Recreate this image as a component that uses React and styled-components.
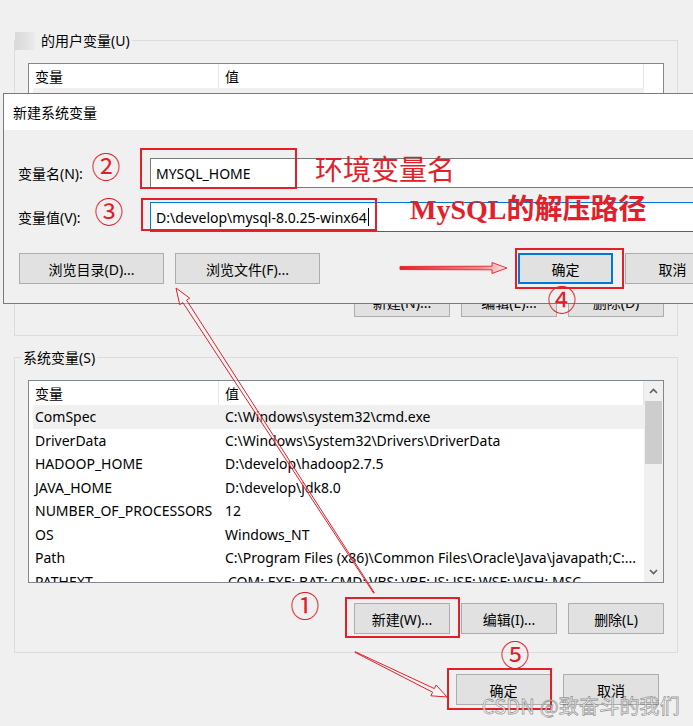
import React from "react";
import styled, { createGlobalStyle } from "styled-components";

const UI_FONT = `"Noto Sans", "Noto Sans CJK SC", sans-serif`;
const RED = "#e3202a";

const GlobalStyle = createGlobalStyle`
  html, body { margin: 0; padding: 0; background: #f0f0f0; }
  * { box-sizing: border-box; }
`;

const Screen = styled.div`
  position: relative;
  width: 693px;
  height: 726px;
  overflow: hidden;
  background: #f0f0f0;
  padding: 40px 15px 0 14px;
  font-family: ${UI_FONT};
  font-size: 14px;
  color: #000;
`;

const Group = styled.section`
  border: 1px solid #dcdcdc;
  padding: 0 13px 18px 13px;
  margin-bottom: ${(p) => (p.$last ? 0 : 21)}px;
`;

const GroupTitle = styled.div`
  display: flex;
  align-items: center;
  width: fit-content;
  height: 20px;
  line-height: 20px;
  margin: -10px 0 12px -7px;
  padding: 0 2px;
  background: #f0f0f0;
`;

const Redacted = styled.span`
  display: inline-block;
  width: 20px;
  height: 18px;
  margin: 0 6px 0 -8px;
  background: linear-gradient(90deg, #d9d9d9, #e4e4e4 70%, #ececec);
  filter: blur(0.6px);
`;

const List = styled.div`
  display: flex;
  height: 203px;
  border: 1px solid #828790;
  background: #fff;
`;

const Table = styled.div`
  flex: 1;
  padding-left: 4px;
  overflow: hidden;
`;

const Row = styled.div`
  display: flex;
  height: ${(p) => (p.$head ? 24 : 23.5)}px;
  align-items: center;
  background: ${(p) => (p.$selected ? "#f0f0f0" : "#fff")};
  white-space: nowrap;
`;

const Cell = styled.div`
  height: 100%;
  display: flex;
  align-items: center;
  overflow: hidden;
  ${(p) =>
    p.$first
      ? `width: 186px; flex: none; padding-left: 2px;`
      : `flex: 1; padding-left: 6px;`}
  border-right: ${(p) => (p.$head ? "1px solid #e5e5e5" : "none")};
`;

const Scrollbar = styled.div`
  width: 19px;
  display: flex;
  flex-direction: column;
  background: ${(p) => (p.$empty ? "#fff" : "#f0f0f0")};
`;

const ScrollArrow = styled.div`
  height: 20px;
  display: flex;
  align-items: center;
  justify-content: center;
`;

const Thumb = styled.div`
  height: 63px;
  margin: 0 1px;
  background: #cdcdcd;
`;

const Spacer = styled.div`
  flex: 1;
`;

const ButtonRow = styled.div`
  display: flex;
  justify-content: flex-end;
  gap: ${(p) => p.$gap || 11}px;
  margin-top: 20px;
  padding-right: ${(p) => p.$inset || 0}px;
`;

const Button = styled.div`
  width: ${(p) => p.$w || 96}px;
  height: 31px;
  flex: none;
  display: flex;
  align-items: center;
  justify-content: center;
  background: #e1e1e1;
  border: ${(p) => (p.$focused ? "2px solid #0078d7" : "1px solid #adadad")};
  white-space: nowrap;
`;

const BottomRow = styled(ButtonRow)`
  margin-top: 21px;
`;

/* dialog over the window */
const Dialog = styled.div`
  position: absolute;
  left: 3px;
  top: 93px;
  width: 728px;
  border: 1px solid #7a7a7a;
  background: #f0f0f0;
  z-index: 2;
`;

const DialogTitle = styled.div`
  height: 36px;
  display: flex;
  align-items: center;
  padding-left: 9px;
  background: #fff;
`;

const DialogBody = styled.div`
  padding: 28px 10px 19px 14px;
  display: flex;
  flex-direction: column;
  gap: 14px;
`;

const FieldRow = styled.div`
  display: flex;
  align-items: center;
  height: 30px;
`;

const FieldLabel = styled.div`
  width: 132px;
  flex: none;
`;

const TextBox = styled.div`
  flex: 1;
  height: 30px;
  display: flex;
  align-items: center;
  padding-left: 5px;
  background: #fff;
  border: 1px solid ${(p) => (p.$focused ? "#0078d7" : "#7a7a7a")};
  white-space: nowrap;
`;

const Caret = styled.span`
  width: 1px;
  height: 18px;
  margin-left: 1px;
  background: #000;
`;

const DialogButtons = styled.div`
  display: flex;
  gap: 11px;
  margin-top: 7px;
  padding-left: 1px;
`;

const PushRight = styled.div`
  margin-left: auto;
  display: flex;
  gap: 12px;
`;

/* red annotations */
const Callout = styled.div`
  position: absolute;
  left: ${(p) => p.$x}px;
  top: ${(p) => p.$y}px;
  width: ${(p) => p.$w}px;
  height: ${(p) => p.$h}px;
  border: 2px solid ${RED};
  z-index: 3;
`;

const Step = styled.span`
  position: absolute;
  left: ${(p) => p.$x}px;
  top: ${(p) => p.$y}px;
  transform: translate(-50%, -50%);
  font-family: "DejaVu Serif", "Noto Sans CJK SC", serif;
  font-size: 29px;
  line-height: 1;
  color: ${RED};
  z-index: 3;
`;

const Note = styled.div`
  position: absolute;
  left: ${(p) => p.$x}px;
  top: ${(p) => p.$y}px;
  font-family: ${(p) =>
    p.$bold
      ? `"Liberation Serif", "Noto Sans CJK SC", serif`
      : `"Noto Sans CJK SC", sans-serif`};
  font-weight: ${(p) => (p.$bold ? 700 : 400)};
  font-size: 28px;
  line-height: 1;
  color: ${RED};
  white-space: nowrap;
  z-index: 3;
`;

const Arrows = styled.svg`
  position: absolute;
  left: 0;
  top: 0;
  z-index: 4;
  pointer-events: none;
`;

const Watermark = styled.div`
  position: absolute;
  right: 13px;
  bottom: 8px;
  font-family: "Noto Sans CJK SC", sans-serif;
  font-size: 20px;
  line-height: 24px;
  letter-spacing: 0.2px;
  color: rgba(255, 255, 255, 0.82);
  -webkit-text-stroke: 0.8px rgba(95, 95, 95, 0.6);
  z-index: 5;
`;

const arrowPoints = (x1, y1, x2, y2, tail, sw, hw, hl) => {
  const dx = x2 - x1;
  const dy = y2 - y1;
  const len = Math.hypot(dx, dy);
  const ux = dx / len;
  const uy = dy / len;
  const px = -uy;
  const py = ux;
  const bx = x2 - ux * hl;
  const by = y2 - uy * hl;
  const pts = [
    [x1 + px * tail, y1 + py * tail],
    [bx + px * sw, by + py * sw],
    [bx + px * hw, by + py * hw],
    [x2, y2],
    [bx - px * hw, by - py * hw],
    [bx - px * sw, by - py * sw],
    [x1 - px * tail, y1 - py * tail],
  ];
  return pts.map((p) => p.map((v) => v.toFixed(1)).join(",")).join(" ");
};

const Chevron = ({ up }) => (
  <svg width="9" height="6" viewBox="0 0 9 6">
    <polyline
      points={up ? "1,5 4.5,1.5 8,5" : "1,1 4.5,4.5 8,1"}
      fill="none"
      stroke="#606060"
      strokeWidth="1.6"
    />
  </svg>
);

const userVars = [
  ["OneDrive", "C:\\Users\\Administrator\\OneDrive"],
  ["Path", "C:\\Users\\Administrator\\AppData\\Local\\Microsoft\\WindowsApps;"],
  ["TEMP", "C:\\Users\\Administrator\\AppData\\Local\\Temp"],
  ["TMP", "C:\\Users\\Administrator\\AppData\\Local\\Temp"],
];

const systemVars = [
  ["ComSpec", "C:\\Windows\\system32\\cmd.exe"],
  ["DriverData", "C:\\Windows\\System32\\Drivers\\DriverData"],
  ["HADOOP_HOME", "D:\\develop\\hadoop2.7.5"],
  ["JAVA_HOME", "D:\\develop\\jdk8.0"],
  ["NUMBER_OF_PROCESSORS", "12"],
  ["OS", "Windows_NT"],
  ["Path", "C:\\Program Files (x86)\\Common Files\\Oracle\\Java\\javapath;C:..."],
  ["PATHEXT", ".COM;.EXE;.BAT;.CMD;.VBS;.VBE;.JS;.JSE;.WSF;.WSH;.MSC"],
];

const VarList = ({ rows, scroll }) => (
  <List>
    <Table>
      <Row $head>
        <Cell $first $head>变量</Cell>
        <Cell $head>值</Cell>
      </Row>
      {rows.map(([name, value], i) => (
        <Row key={name + i} $selected={i === 0}>
          <Cell $first>{name}</Cell>
          <Cell>{value}</Cell>
        </Row>
      ))}
    </Table>
    {scroll ? (
      <Scrollbar>
        <ScrollArrow>
          <Chevron up />
        </ScrollArrow>
        <Thumb />
        <Spacer />
        <ScrollArrow>
          <Chevron />
        </ScrollArrow>
      </Scrollbar>
    ) : (
      <Scrollbar $empty />
    )}
  </List>
);

const App = () => {
  return (
    <Screen>
      <GlobalStyle />

      <Group>
        <GroupTitle>
          <Redacted />
          的用户变量(U)
        </GroupTitle>
        <VarList rows={userVars} />
        <ButtonRow>
          <Button>新建(N)...</Button>
          <Button>编辑(E)...</Button>
          <Button>删除(D)</Button>
        </ButtonRow>
      </Group>

      <Group $last>
        <GroupTitle>系统变量(S)</GroupTitle>
        <VarList rows={systemVars} scroll />
        <ButtonRow>
          <Button>新建(W)...</Button>
          <Button>编辑(I)...</Button>
          <Button>删除(L)</Button>
        </ButtonRow>
      </Group>

      <BottomRow $gap={12} $inset={19}>
        <Button $w={95}>确定</Button>
        <Button $w={96}>取消</Button>
      </BottomRow>

      <Dialog>
        <DialogTitle>新建系统变量</DialogTitle>
        <DialogBody>
          <FieldRow>
            <FieldLabel>变量名(N):</FieldLabel>
            <TextBox>MYSQL_HOME</TextBox>
          </FieldRow>
          <FieldRow>
            <FieldLabel>变量值(V):</FieldLabel>
            <TextBox $focused>
              D:\develop\mysql-8.0.25-winx64
              <Caret />
            </TextBox>
          </FieldRow>
          <DialogButtons>
            <Button $w={145}>浏览目录(D)...</Button>
            <Button $w={145}>浏览文件(F)...</Button>
            <PushRight>
              <Button $w={95} $focused>确定</Button>
              <Button $w={95}>取消</Button>
            </PushRight>
          </DialogButtons>
        </DialogBody>
      </Dialog>

      <Callout $x={140} $y={148} $w={157} $h={41} />
      <Callout $x={141} $y={198} $w={236} $h={33} />
      <Callout $x={515} $y={248} $w={109} $h={41} />
      <Callout $x={345} $y={597} $w={115} $h={41} />
      <Callout $x={447} $y={668} $w={105} $h={42} />

      <Step $x={106} $y={168}>②</Step>
      <Step $x={109} $y={213}>③</Step>
      <Step $x={562} $y={301}>④</Step>
      <Step $x={305} $y={607}>①</Step>
      <Step $x={515} $y={656}>⑤</Step>

      <Note $x={315} $y={154}>环境变量名</Note>
      <Note $x={410} $y={196} $bold>MySQL的解压路径</Note>

      <Arrows width="693" height="726" viewBox="0 0 693 726">
        <defs>
          <linearGradient id="shade" x1="0" y1="0" x2="1" y2="0">
            <stop offset="0" stopColor={RED} />
            <stop offset="0.75" stopColor="#f08a8e" />
            <stop offset="1" stopColor="#fde6e7" />
          </linearGradient>
        </defs>
        <polygon
          points={arrowPoints(400, 268, 507, 268, 1.6, 1.8, 5.5, 15)}
          fill="url(#shade)"
          stroke={RED}
          strokeWidth="0.9"
        />
        <polygon
          points={arrowPoints(374, 593, 176, 288, 0.3, 2.2, 6, 16)}
          fill="rgba(255,255,255,0.35)"
          stroke={RED}
          strokeWidth="1"
        />
        <polygon
          points={arrowPoints(355, 652, 447, 697, 0.3, 2, 6, 15)}
          fill="rgba(255,255,255,0.35)"
          stroke={RED}
          strokeWidth="1"
        />
      </Arrows>

      <Watermark>CSDN @致奋斗的我们</Watermark>
    </Screen>
  );
};

export default App;
